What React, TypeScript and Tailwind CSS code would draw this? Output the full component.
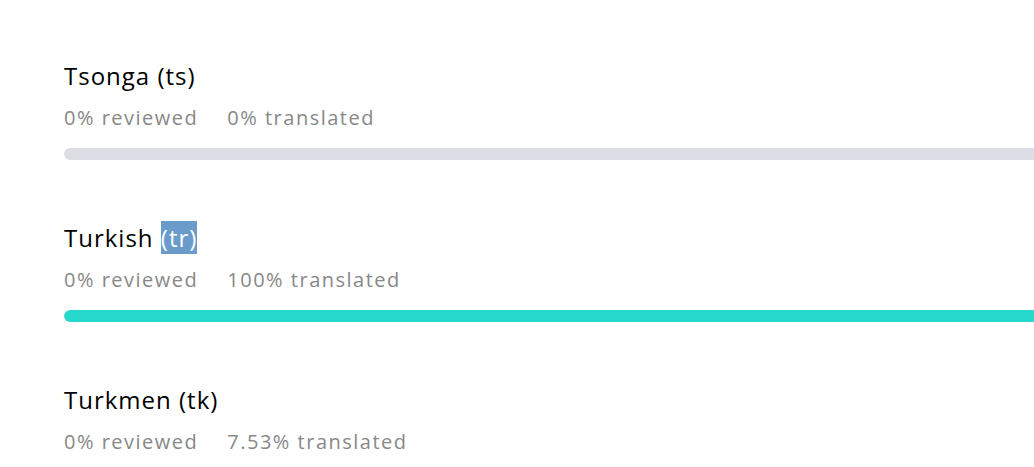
const rows = [
  { name: "Tsonga", code: "ts", reviewed: "0%", translated: "0%", pct: 0, selected: false },
  { name: "Turkish", code: "tr", reviewed: "0%", translated: "100%", pct: 100, selected: true },
  { name: "Turkmen", code: "tk", reviewed: "0%", translated: "7.53%", pct: 7.53, selected: false },
];

export default function App() {
  return (
    <div className="h-[467px] w-[1034px] overflow-hidden bg-white font-['Open_Sans',sans-serif]">
      <div className="w-[1100px] pl-16 pt-[60px]">
        {rows.map((r) => (
          <div key={r.code} className="mb-[62px]">
            <h3 className="text-[24px] leading-[32px] tracking-[1px] text-black">
              {r.name}{" "}
              {r.selected ? (
                <span className="bg-[#6a9bcb] text-white">({r.code})</span>
              ) : (
                <span>({r.code})</span>
              )}
            </h3>
            <div className="mt-3 flex gap-[29px] text-[20px] leading-[28px] tracking-[1.5px] text-[#888888]">
              <span>{r.reviewed} reviewed</span>
              <span>{r.translated} translated</span>
            </div>
            <div className="mt-4 h-3 overflow-hidden rounded-full bg-[#dcdde5]">
              <div className="h-full rounded-full bg-[#26d9cc]" style={{ width: `${r.pct}%` }} />
            </div>
          </div>
        ))}
      </div>
    </div>
  );
}
